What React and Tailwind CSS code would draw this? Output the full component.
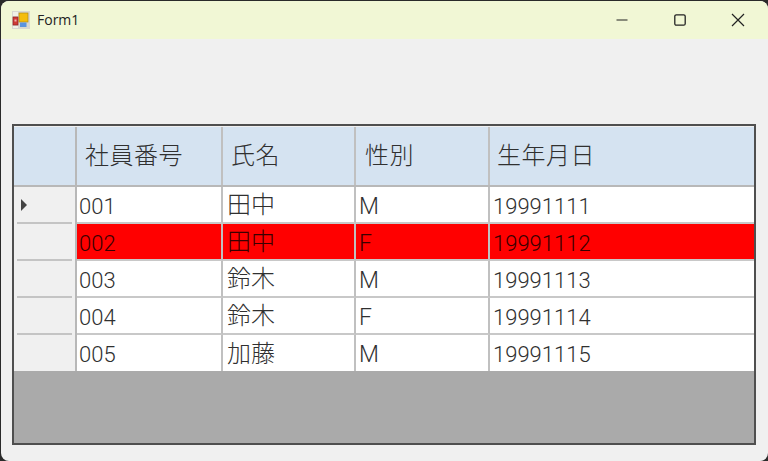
const rows = [
  ["001", "田中", "M", "19991111"],
  ["002", "田中", "F", "19991112"],
  ["003", "鈴木", "M", "19991113"],
  ["004", "鈴木", "F", "19991114"],
  ["005", "加藤", "M", "19991115"],
];
const font = { fontFamily: 'Roboto, "Noto Sans CJK JP", "Liberation Sans", sans-serif' };
const heads = [
  ["社員番号", "w-[146px]", "pl-[8px]"],
  ["氏名", "w-[133px]", "pl-[8px]"],
  ["性別", "w-[134px]", "pl-[9px]"],
  ["生年月日", "flex-1", "pl-[7px]"],
];
const widths = ["w-[146px]", "w-[133px]", "w-[134px]", "flex-1"];
const pads = ["pl-[2px] pt-[3px]", "pl-[4px] pt-[1px]", "pl-[3px] pt-[5px]", "pl-[3px] pt-[3px]"];
const sizes = ["text-[22px]", "text-[24px]", "text-[23px]", "text-[22px]"];

function AppIcon() {
  return (
    <svg width="18" height="18" viewBox="0 0 18 18" className="shrink-0">
      <rect x="0" y="0" width="18" height="18" fill="#d8d8d0" />
      <rect x="1" y="1" width="5" height="4" fill="#f0f0e6" />
      <rect x="7" y="2" width="9" height="9" fill="#f4bd0c" stroke="#b08a18" strokeWidth="0.7" />
      <rect x="1" y="6" width="5" height="8" fill="#cf3a36" stroke="#8e2020" strokeWidth="0.7" />
      <rect x="2.5" y="8.5" width="2" height="2" fill="#eeb0b0" />
      <rect x="8" y="11.5" width="6.5" height="4.5" fill="#5a94e0" />
      <rect x="1" y="15" width="5" height="2" fill="#f0f0e6" />
    </svg>
  );
}

export default function App() {
  return (
    <div className="w-[768px] h-[461px] bg-[#2a2a2a] overflow-hidden">
      <div className="w-[767px] h-[460px] ml-px mt-px rounded-[8px] bg-[#f0f0f0] overflow-hidden flex flex-col">
        <div className="h-[38px] shrink-0 bg-[#f1f7d5] flex items-center pl-[11px]">
          <AppIcon />
          <span className="ml-[7px] text-[14px] text-[#222] leading-none" style={{ fontFamily: '"Open Sans", "Liberation Sans", sans-serif' }}>Form1</span>
          <div className="ml-auto flex items-center">
            <svg width="14" height="14" viewBox="0 0 14 14" className="mr-[44px]">
              <path d="M1.5 7h11" stroke="#222" strokeWidth="1.2" />
            </svg>
            <svg width="14" height="14" viewBox="0 0 14 14" className="mr-[44px]">
              <rect x="1.8" y="1.8" width="10.4" height="10.4" rx="1.5" fill="none" stroke="#222" strokeWidth="1.3" />
            </svg>
            <svg width="14" height="14" viewBox="0 0 14 14" className="mr-[23px]">
              <path d="M1 1l12 12M13 1L1 13" stroke="#222" strokeWidth="1.2" />
            </svg>
          </div>
        </div>
        <div className="flex-1 pt-[85px] pl-[11px] pr-[12px] pb-[15px]">
          <div className="h-[321px] border-2 border-[#4f4f4f] bg-[#aaaaaa] flex flex-col" style={font}>
            <div className="h-[61px] shrink-0 flex bg-[#d5e3f1] border-t border-[#f0f0f0] border-b-2 border-b-[#b8b8b8] text-[#303030] text-[24px] font-light">
              <div className="w-[63px] border-r-2 border-[#b8b8b8]" />
              {heads.map(([t, w, p], i) => (
                <div key={t} className={`${w} ${p} flex items-center ${i < 3 ? "border-r-2 border-[#c0c0c0]" : ""}`}>
                  <span className="tracking-[0.5px]">{t}</span>
                </div>
              ))}
            </div>
            {rows.map((r, idx) => (
              <div key={r[0]} className={`${idx === 4 ? "h-[36px]" : "h-[37px]"} shrink-0 flex text-[#303030] font-light`}>
                <div className="w-[63px] bg-[#f0f0f0] flex flex-col border-r-2 border-[#b8b8b8]">
                  <div className="flex-1 flex items-center pl-[7px]">
                    {idx === 0 && (
                      <svg width="7" height="12" viewBox="0 0 7 12">
                        <path d="M0 0l6 6-6 6z" fill="#444" />
                      </svg>
                    )}
                  </div>
                  {idx < 4 && <div className="h-[2px] mx-[3px] bg-[#c4c4c4]" />}
                </div>
                {r.map((c, j) => (
                  <div
                    key={j}
                    className={`${widths[j]} ${pads[j]} ${sizes[j]} flex items-center ${idx === 1 ? "bg-[#ff0000] text-[#3a0000]" : "bg-white"} ${idx < 4 ? "border-b-2 border-b-[#c8c8c8]" : ""} ${j < 3 ? "border-r-2 border-r-[#c0c0c0]" : ""}`}
                  >
                    {c}
                  </div>
                ))}
              </div>
            ))}
          </div>
        </div>
      </div>
    </div>
  );
}
